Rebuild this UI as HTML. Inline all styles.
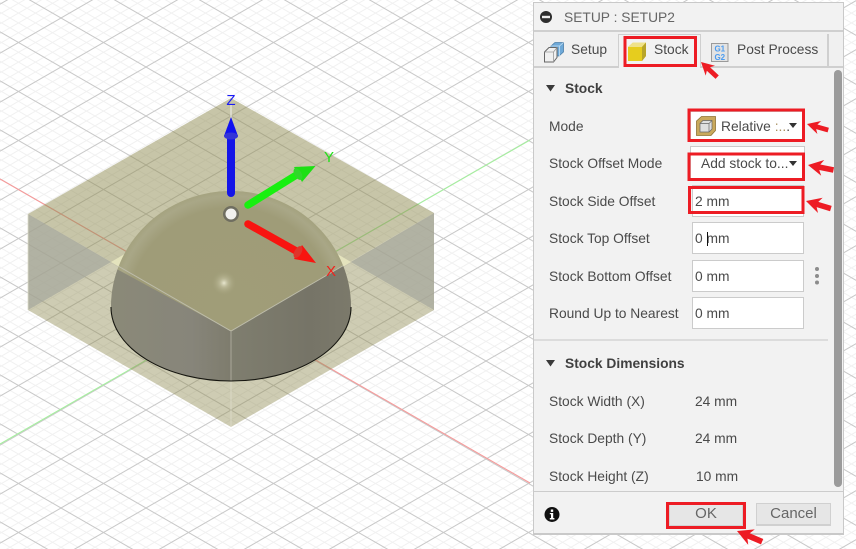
<!DOCTYPE html>
<html><head><meta charset="utf-8"><style>
html,body{margin:0;padding:0;background:#fff}
#r{position:relative;width:856px;height:549px;overflow:hidden;font-family:"Liberation Sans",sans-serif;font-size:13.8px;color:#4a4a4a}
#r>svg{position:absolute;left:0;top:0}
.a{position:absolute}
.t{position:absolute;white-space:nowrap;line-height:16px;margin-top:1px}
.in{position:absolute;left:692px;width:110px;background:#fff;border:1px solid #cbcbcb}
.b{font-weight:bold;color:#404040}
</style></head><body><div id="r">
<svg width="856" height="549" viewBox="0 0 856 549">
<defs>
<pattern id="g" patternUnits="userSpaceOnUse" width="85" height="49" patternTransform="translate(231 312)">
<path fill="none" stroke="#f1f1f1" stroke-width="1" d="M0 9.8L85 58.8M0 -39.2L85 9.8M0 19.6L85 68.6M0 -29.4L85 19.6M0 29.4L85 78.4M0 -19.6L85 29.4M0 39.2L85 88.2M0 -9.8L85 39.2M0 9.8L85 -39.2M0 58.8L85 9.8M0 19.6L85 -29.4M0 68.6L85 19.6M0 29.4L85 -19.6M0 78.4L85 29.4M0 39.2L85 -9.8M0 88.2L85 39.2"/>
<path fill="none" stroke="#c9c9c9" stroke-width="1" d="M0 0L85 49M0 49L85 0"/>
</pattern>
<radialGradient id="dome" gradientUnits="userSpaceOnUse" cx="231" cy="311" r="120">
<stop offset="0" stop-color="#a09d78"/><stop offset=".86" stop-color="#9f9c78"/><stop offset=".96" stop-color="#a9a787"/><stop offset="1" stop-color="#a5a380"/>
</radialGradient>
<linearGradient id="sl" x1="0" y1="0" x2="1" y2="0"><stop offset="0" stop-color="#8b8a78"/><stop offset=".7" stop-color="#87857a"/><stop offset="1" stop-color="#7e7c6d"/></linearGradient>
<linearGradient id="sr" x1="0" y1="0" x2="1" y2="0"><stop offset="0" stop-color="#7f7e6f"/><stop offset=".6" stop-color="#767467"/><stop offset="1" stop-color="#7d7b6c"/></linearGradient>
<radialGradient id="spec"><stop offset="0" stop-color="#e8e7cf"/><stop offset=".35" stop-color="#c6c4a4" stop-opacity=".6"/><stop offset="1" stop-color="#9f9c76" stop-opacity="0"/></radialGradient>
<clipPath id="dc"><path d="M111 307A120 116 0 0 1 351 307A120 74 0 0 1 111 307Z"/></clipPath>
</defs>
<rect width="856" height="549" fill="#fff"/>
<rect width="856" height="549" fill="url(#g)"/>
<!-- axes -->
<path d="M0 179L530 483" stroke="#f79a9a" stroke-width="1.1" fill="none"/>
<path d="M0 444L530 140" stroke="#a5f09e" stroke-width="1.1" fill="none"/>
<!-- box -->
<path d="M231 98L434 213L231 331L28 214Z" fill="#8f8b52" fill-opacity=".5"/>
<path d="M28 214L231 331L231 427L28 310Z" fill="#8f8b52" fill-opacity=".44"/>
<path d="M434 213L231 331L231 427L434 310Z" fill="#8f8b52" fill-opacity=".44"/>
<path d="M28 214L111 262L28 310Z" fill="#a6a79c" fill-opacity=".72"/>
<path d="M434 213L351 262L434 310Z" fill="#a6a79c" fill-opacity=".72"/>
<path d="M111 262L128 252V272Z" fill="#e4e3bd"/>
<path d="M351 262L334 252V272Z" fill="#e4e3bd"/>
<path d="M28 214V310M231 331V427" stroke="#dddccb" stroke-opacity=".8" stroke-width="1" fill="none"/>
<!-- dome -->
<path d="M111 307A120 116 0 0 1 351 307A120 74 0 0 1 111 307Z" fill="url(#dome)"/>
<g clip-path="url(#dc)">
<path d="M100 260L231 331V400H100Z" fill="url(#sl)"/>
<path d="M362 255L231 331V400H362Z" fill="url(#sr)"/>
<circle cx="224" cy="283" r="13" fill="url(#spec)"/>
<path d="M118 266L231 331L346 264" stroke="#bdbcaa" stroke-width="1" fill="none"/>
<path d="M231 331V382" stroke="#a9a89a" stroke-width="1" fill="none"/>
</g>
<path d="M111 307A120 74 0 0 0 351 307" fill="none" stroke="#161610" stroke-width="1.1"/>
<!-- triad -->
<path d="M231 105V118" stroke="#e8e8e0" stroke-width="1.2"/>
<path d="M231 193V136" stroke="#1414e8" stroke-width="8" stroke-linecap="round"/>
<path d="M231 117L238 136H224Z" fill="#1010f0"/>
<ellipse cx="231" cy="136" rx="7" ry="3.5" fill="#3434d8"/>
<path d="M248 205L298 174" stroke="#18f010" stroke-width="7.500" stroke-linecap="round"/>
<path d="M315.500 166L302 182L294 167Z" fill="#1de014"/>
<ellipse cx="298" cy="174" rx="3.500" ry="6.500" transform="rotate(-30 298 174)" fill="#30d82a"/>
<path d="M248 224L298 252" stroke="#f81410" stroke-width="7.500" stroke-linecap="round"/>
<path d="M316 263L294 259L302 245Z" fill="#f81410"/>
<ellipse cx="298" cy="252" rx="3.500" ry="6.500" transform="rotate(30 298 252)" fill="#e0342a"/>
<circle cx="231" cy="214" r="8" fill="#6f6e60"/>
<circle cx="231" cy="214" r="5.500" fill="#f1f1ee"/>
<text x="231" y="105" font-family="Liberation Sans" font-size="15" fill="#1a1af5" text-anchor="middle">Z</text>
<text x="329" y="162" font-family="Liberation Sans" font-size="15" fill="#22e01a" text-anchor="middle">Y</text>
<text x="331" y="276" font-family="Liberation Sans" font-size="15" fill="#f2201c" text-anchor="middle">X</text>
</svg>

<!-- panel -->
<div class="a" style="left:533px;top:2px;width:311px;height:533px;background:#f2f2f2;box-sizing:border-box;border:1px solid #c9c9c9;border-bottom-width:2px"></div>
<div class="a" style="left:534px;top:30px;width:309px;height:2px;background:#cfcfcf"></div>
<div class="a" style="left:534px;top:32px;width:309px;height:36px;background:#f0f0f0"></div>
<div class="a" style="left:534px;top:66px;width:84px;height:2px;background:#cfcfcf"></div>
<div class="a" style="left:701px;top:66px;width:142px;height:2px;background:#cfcfcf"></div>
<div class="a" style="left:618px;top:34px;width:83px;height:34px;background:#f2f2f2;box-sizing:border-box;border:1px solid #cfcfcf;border-bottom:0"></div>
<div class="a" style="left:827px;top:34px;width:2px;height:32px;background:#cfcfcf"></div>
<div class="a" style="left:534px;top:491px;width:309px;height:1px;background:#cccccc"></div>
<div class="a" style="left:534px;top:339px;width:294px;height:2px;background:#dcdcdc"></div>
<div class="a" style="left:834px;top:70px;width:8px;height:417px;background:#9b9b9b;border-radius:4px"></div>

<div class="t" style="left:564px;top:9px;color:#666">SETUP : SETUP2</div>
<div class="t" style="left:571px;top:41px">Setup</div>
<div class="t" style="left:654px;top:41px">Stock</div>
<div class="t" style="left:737px;top:41px">Post Process</div>

<div class="t b" style="left:565px;top:80px">Stock</div>
<div class="t" style="left:549px;top:118px">Mode</div>
<div class="t" style="left:549px;top:155px">Stock Offset Mode</div>
<div class="t" style="left:549px;top:193px">Stock Side Offset</div>
<div class="t" style="left:549px;top:230px">Stock Top Offset</div>
<div class="t" style="left:549px;top:268px">Stock Bottom Offset</div>
<div class="t" style="left:549px;top:305px">Round Up to Nearest</div>
<div class="t b" style="left:565px;top:355px">Stock Dimensions</div>
<div class="t" style="left:549px;top:393px">Stock Width (X)</div>
<div class="t" style="left:549px;top:430px">Stock Depth (Y)</div>
<div class="t" style="left:549px;top:468px">Stock Height (Z)</div>

<div class="in" style="left:690px;top:111px;width:113px;height:29px"></div>
<div class="in" style="left:690px;top:146px;width:113px;height:31px"></div>
<div class="in" style="top:185px;height:30px"></div>
<div class="in" style="top:222px;height:30px"></div>
<div class="in" style="top:260px;height:30px"></div>
<div class="in" style="top:297px;height:30px"></div>

<div class="t" style="left:721px;top:118px">Relative <span style="color:#a89060">:..</span>.</div>
<div class="t" style="left:701px;top:155px">Add stock to...</div>
<div class="t" style="left:695px;top:193px">2 mm</div>
<div class="t" style="left:695px;top:230px">0 mm</div>
<div class="t" style="left:695px;top:268px">0 mm</div>
<div class="t" style="left:695px;top:305px">0 mm</div>
<div class="t" style="left:695px;top:393px">24 mm</div>
<div class="t" style="left:695px;top:430px">24 mm</div>
<div class="t" style="left:696px;top:468px">10 mm</div>

<div class="a" style="left:669px;top:504px;width:74px;height:22px;background:#e6e6e6;box-sizing:border-box;border:1px solid #d2d2d2"></div>
<div class="a" style="left:756px;top:503px;width:75px;height:23px;background:#e6e6e6;box-sizing:border-box;border:1px solid #d0d0d0;border-width:1px 1px 2px"></div>
<div class="t" style="left:669px;top:505px;width:74px;text-align:center;color:#666;font-size:15px">OK</div>
<div class="t" style="left:756px;top:505px;width:75px;text-align:center;color:#666;font-size:15px">Cancel</div>

<svg width="856" height="549" viewBox="0 0 856 549">
<defs>
<path id="ar" d="M0 0L15 -8L12 -2.800H26V2.800H12L15 8Z" fill="#ed1c24"/>
</defs>
<!-- title icon -->
<circle cx="546" cy="17" r="6" fill="#2e2e2e"/><rect x="542" y="15.800" width="8" height="2.400" fill="#eee"/>
<!-- setup icon -->
<path d="M551 46L555 42.500H563.500V52L559 56H551Z" fill="#6ea9d8" stroke="#4d7fa8" stroke-width=".8"/>
<path d="M551 46H559.500V56M559.500 46L563.500 42.500" fill="none" stroke="#c8e0f2" stroke-width=".8"/>
<path d="M544.500 52L549 47.500H557V57.500L553.500 62H544.500Z" fill="#f0f0f0" stroke="#666" stroke-width="1"/>
<path d="M544.500 52H553.500V62M553.500 52L557 47.500" fill="none" stroke="#999" stroke-width=".8"/>
<!-- stock icon -->
<path d="M628 47L633 42.500H646V56L642 61H628Z" fill="#e6cd1e"/>
<path d="M628 47L633 42.500H646L642 47Z" fill="#efe28a"/>
<path d="M642 47L646 42.500V56L642 61Z" fill="#b8a52a"/>
<!-- G1G2 icon -->
<rect x="711.500" y="43.500" width="16.500" height="18" fill="#e3e3e3" stroke="#9a9a9a"/>
<text x="719.800" y="51.500" font-family="Liberation Sans" font-weight="bold" font-size="8" fill="#4c9cf0" text-anchor="middle">G1</text>
<text x="719.800" y="60" font-family="Liberation Sans" font-weight="bold" font-size="8" fill="#4c9cf0" text-anchor="middle">G2</text>
<!-- section arrows -->
<path d="M546 85H555L550.500 91.500Z" fill="#3a3a3a"/>
<path d="M546 360H555L550.500 366.500Z" fill="#3a3a3a"/>
<!-- mode icon -->
<path d="M696.500 121L701.500 116.500H715.500V130.500L711 135.500H696.500Z" fill="#c9a95c" stroke="#8f7436" stroke-width=".8"/>
<path d="M700 123.500L703 120.500H712V129L709 132H700Z" fill="#dfdfdf" stroke="#666" stroke-width=".7"/>
<path d="M700 123.500H709V132M709 123.500L712 120.500" fill="none" stroke="#666" stroke-width=".7"/>
<!-- drop carets -->
<path d="M789 123H797L793 128Z" fill="#333"/>
<path d="M789 161H797L793 166Z" fill="#333"/>
<!-- caret -->
<path d="M707.500 232V246" stroke="#111" stroke-width="1"/>
<!-- dots -->
<circle cx="817" cy="269" r="2" fill="#8c8c8c"/><circle cx="817" cy="276" r="2" fill="#8c8c8c"/><circle cx="817" cy="282.500" r="2" fill="#8c8c8c"/>
<!-- info -->
<circle cx="552" cy="514.500" r="7.500" fill="#111"/>
<rect x="550.800" y="509.500" width="2.400" height="2.400" fill="#fff"/>
<path d="M549.800 513H553.200V518H554.400V519.500H549.800V518H551V514.300H549.800Z" fill="#fff"/>
<!-- red boxes -->
<g fill="none" stroke="#ed1c24" stroke-width="3">
<rect x="625" y="37.500" width="70.500" height="28"/>
<rect x="689" y="110" width="114.500" height="30.500"/>
<rect x="689" y="154" width="114.500" height="25.500"/>
<rect x="689.500" y="187.500" width="113.500" height="25"/>
<rect x="667.500" y="503.500" width="77" height="24"/>
</g>
<!-- red arrows -->
<use href="#ar" transform="translate(701 62) rotate(43) scale(.85)"/>
<use href="#ar" transform="translate(807 124) rotate(16) scale(.85)"/>
<use href="#ar" transform="translate(808 165) rotate(11)"/>
<use href="#ar" transform="translate(806 201) rotate(17)"/>
<use href="#ar" transform="translate(737 531) rotate(23) scale(1.05)"/>
</svg>
</div></body></html>
